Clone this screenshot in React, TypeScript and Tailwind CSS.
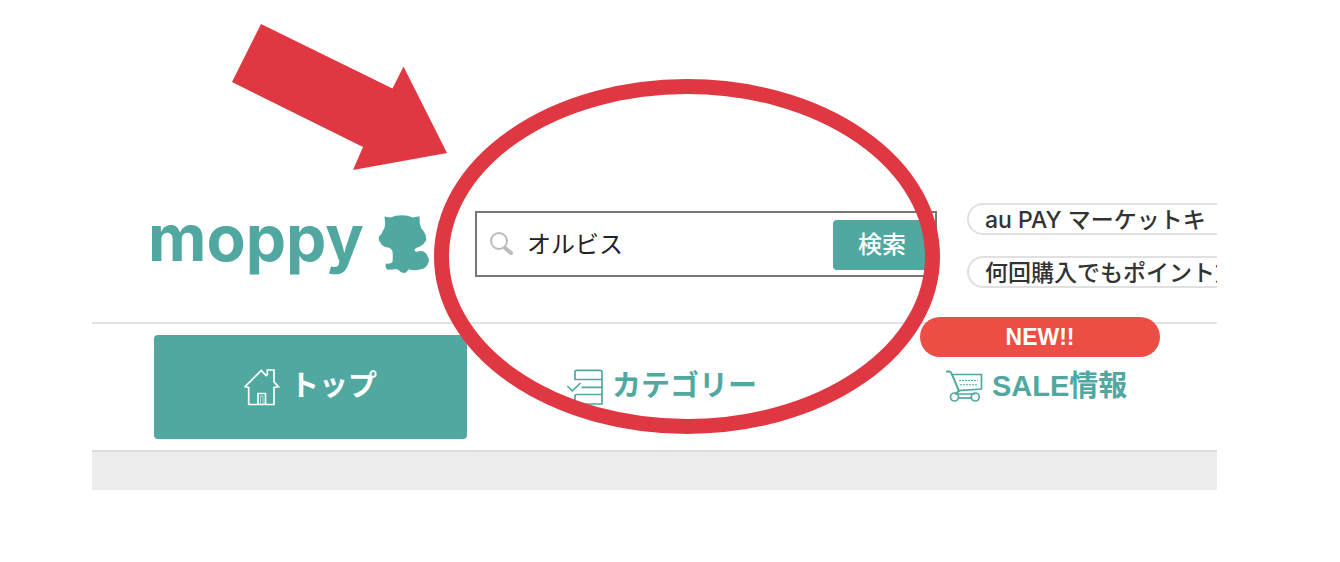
import { useState } from 'react'

const keywords = ['au PAY マーケットキ', '何回購入でもポイント対']

function Mascot() {
  return (
    <svg viewBox="0 0 54 60" className="h-[60px] w-[54px]" fill="#50a8a1" aria-hidden="true">
      <path d="M7.5 2.5L13.5 3.5Q18 1.2 25 1.2Q31 1.2 36 3.5L42.5 2.3L42.8 10Q43.5 14 46.5 17Q49.5 21 49.3 26Q47.5 30 43 32.5Q38.5 34 37.5 35.5Q37.5 38 39.5 37.8Q42 36.8 45 37Q49.5 38 50.5 42.5Q53.5 46 50.5 50.5Q48 55 43.5 55.3Q38 57 31.5 55.3Q30 58.8 26.5 59Q23 58.500 21.500 56Q19 54.500 16.500 55.500L10.500 55.700Q7.500 53 9 49.500Q13 50.500 15.500 48Q16 42 15.500 37.500Q14 33.800 10.700 33.500Q5.500 32.500 4 29.500Q1 26.500 2 22.500Q5 20 6 16.500Q8 14 8.200 10Z" />
    </svg>
  )
}

function HomeIcon() {
  return (
    <svg viewBox="0 0 38 38" className="h-[38px] w-[38px]" fill="none" stroke="currentColor" strokeWidth="1.7" aria-hidden="true">
      <path d="M4.7 19.5L1 18.7L17.3 2.5L22 7.5L23.3 6.5V2H30V14L34.5 18.7L30 19.5V36.5H4.7Z" />
      <path d="M14 36.5V25.5H21.5V36.5" />
      <path d="M16.5 36.5V28H19V36.5" strokeWidth=".6" />
    </svg>
  )
}

function ListIcon() {
  return (
    <svg viewBox="0 0 38 38" className="h-[38px] w-[38px]" fill="none" stroke="currentColor" strokeWidth="1.7" aria-hidden="true">
      <path d="M36 11.5H9V4Q9 2.3 10.7 2.3H34.5Q36 2.3 36 4V36H10.5Q9 36 9 34.5V28Q9 26.5 10.5 26.5H36" />
      <path d="M15.5 19.3H36M1.3 18L6.3 22.8L14.5 15" />
    </svg>
  )
}

function CartIcon() {
  return (
    <svg viewBox="0 0 38 38" className="h-[38px] w-[38px]" fill="none" stroke="currentColor" strokeWidth="1.7" aria-hidden="true">
      <path d="M0 3.5H3.5Q5 4 6 6.5L13 23L9 26" strokeWidth="2" />
      <path d="M6 6.5H35.5V21L12 22.7M9 26H29" />
      <path d="M12 30H26" />
      <path d="M13 12.5H32M14 16.7H32" strokeDasharray="2 1" strokeWidth="1.1" />
      <circle cx="8.5" cy="29" r="4" />
      <circle cx="29.3" cy="29" r="4" />
    </svg>
  )
}

export default function App() {
  const [query, setQuery] = useState('オルビス')

  return (
    <div className="relative overflow-hidden bg-white pb-[72px] pl-[92px] pr-[123px] font-['Liberation_Sans','Noto_Sans_CJK_JP',sans-serif]">
      <div className="overflow-hidden">
        <header className="flex items-start border-b-2 border-[#e2e2e2] pb-[34px] pl-14 pt-[203px]">
          <a href="#" className="flex w-[327px] shrink-0 items-center gap-3 text-[#50a8a1]">
            <span className="w-[217px] pb-3 font-['Inter',sans-serif] text-[64px] font-bold leading-[70px]">moppy</span>
            <Mascot />
          </a>

          <form
            className="mt-2 flex h-[66px] w-[462px] shrink-0 items-center border-2 border-[#777] bg-white pl-3 pr-1 pt-px"
            onSubmit={e => e.preventDefault()}
          >
            <svg viewBox="0 0 26 26" className="h-[26px] w-[26px] shrink-0" fill="none" stroke="#b8bcbf" aria-hidden="true">
              <circle cx="10" cy="9" r="8" strokeWidth="2" />
              <path d="M16 16L22 21" strokeWidth="4" strokeLinecap="round" />
            </svg>
            <input
              type="text"
              aria-label="キーワード検索"
              value={query}
              onChange={e => setQuery(e.target.value)}
              className="ml-3 min-w-0 flex-1 text-2xl text-[#222] outline-none"
            />
            <button type="submit" className="h-[50px] w-[98px] shrink-0 rounded bg-[#50a8a1] text-2xl font-medium text-white">
              検索
            </button>
          </form>

          <ul className="ml-[30px] flex shrink-0 flex-col gap-[21px] font-['Inter','Noto_Sans_CJK_JP',sans-serif] text-[23px] font-medium text-[#333]">
            {keywords.map(word => (
              <li key={word}>
                <a href="#" className="flex h-8 w-[300px] items-center whitespace-nowrap rounded-full border-2 border-[#e0e0e0] px-4 pt-[3px]">
                  {word}
                </a>
              </li>
            ))}
          </ul>
        </header>

        <nav className="flex gap-[9px] border-b-2 border-[#dcdcdc] px-[62px] py-[11px] text-[29px] font-bold text-[#50a8a1]">
          <a href="#" className="flex h-[104px] shrink-0 items-center gap-2 whitespace-nowrap rounded bg-[#50a8a1] px-[90px] text-white">
            <HomeIcon />
            トップ
          </a>
          <a href="#" className="flex h-[104px] shrink-0 items-center gap-2 whitespace-nowrap px-[90px]">
            <ListIcon />
            カテゴリー
          </a>
          <a href="#" className="relative flex h-[104px] shrink-0 items-center gap-2 whitespace-nowrap px-[90px]">
            <span className="absolute -top-[18px] left-16 flex h-10 w-60 items-center justify-center rounded-full bg-[#ec4d44] text-[23px] text-white">
              NEW!!
            </span>
            <CartIcon />
            SALE情報
          </a>
        </nav>
        <div className="h-[38px] bg-[#ededed]" />
      </div>

      {/* hand-placed marks pointing at the search box */}
      <svg viewBox="0 0 730 430" className="pointer-events-none absolute left-[220px] top-3 h-[430px] w-[730px]" aria-hidden="true">
        <path d="M41 12L172.5 76.5L183.5 54.5L227 141L133 158L143 135L12 70Z" fill="#e03842" />
        <ellipse cx="467" cy="244.5" rx="245.5" ry="170" fill="none" stroke="#e03842" strokeWidth="15" />
      </svg>
    </div>
  )
}
